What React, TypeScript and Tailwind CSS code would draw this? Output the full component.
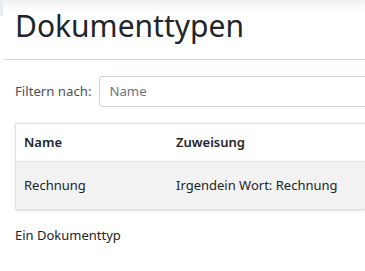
export default function App() {
  const font = { fontFamily: '"Noto Sans", "Open Sans", sans-serif' };
  return (
    <div className="relative w-[365px] h-[271px] overflow-hidden bg-white text-[#212529]" style={font}>
      <div className="absolute left-0 top-0 w-full h-[12px] bg-gradient-to-b from-[#f1f1f1] to-white" />
      <div className="absolute left-0 top-0 w-[3px] h-[16px] bg-[#e9ecef]" />
      <div className="relative pl-[3px]">
        <div className="border-b border-[#d5d7da] pl-[12px] pt-[4px] pb-[11px]">
          <h1 className="text-[30px] leading-[44px] font-normal">Dokumenttypen</h1>
        </div>
      </div>
      <div className="pl-[15px] pt-[16px] flex items-center gap-[8px]">
        <span className="text-[13.2px] text-[#4a4f55]">Filtern nach:</span>
        <div className="flex-1 h-[31px] border border-[#ced4da] rounded-l-[4px] border-r-0 flex items-center pl-[9px] text-[13.2px] text-[#6c757d]">
          Name
        </div>
      </div>
      <div className="ml-[15px] mt-[16px] border border-r-0 border-[#dee2e6] shadow-sm text-[13px]">
        <div className="flex h-[38px] items-center border-b border-[#dee2e6] font-semibold">
          <div className="w-[160px] pl-[8px]">Name</div>
          <div>Zuweisung</div>
        </div>
        <div className="flex h-[47px] items-center bg-[#f2f2f2]">
          <div className="w-[160px] pl-[8px]">Rechnung</div>
          <div>Irgendein Wort: Rechnung</div>
        </div>
      </div>
      <p className="pl-[15px] mt-[16px] text-[13px]">Ein Dokumenttyp</p>
    </div>
  );
}
